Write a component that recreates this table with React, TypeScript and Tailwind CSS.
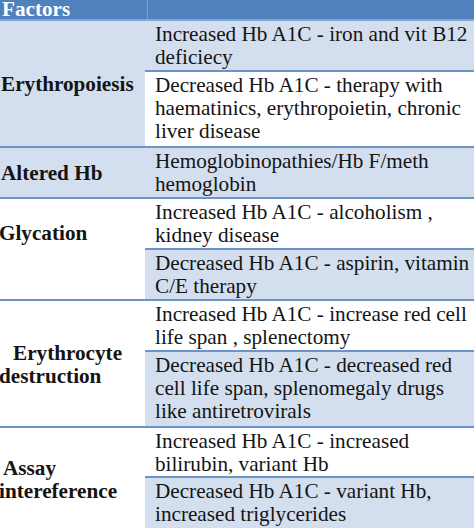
import React from "react";

type Cell = { lines: string[]; bg: string; h: string; divider?: boolean };

function Group({
  label,
  leftBg,
  labelClass,
  cells,
}: {
  label: React.ReactNode;
  leftBg: string;
  labelClass: string;
  cells: Cell[];
}) {
  return (
    <div className="flex border-b-2 border-[#6d93c8]">
      <div className={`w-[145px] shrink-0 flex items-center font-bold ${leftBg}`}>
        <div className={labelClass}>{label}</div>
      </div>
      <div className="flex-1 flex flex-col overflow-hidden">
        {cells.map((c, i) => (
          <div
            key={i}
            className={`${c.bg} ${c.h} ${c.divider ? "border-b-2 border-[#6d93c8]" : ""} pl-[10px] pt-[2px] whitespace-nowrap`}
          >
            {c.lines.map((l, j) => (
              <div key={j}>{l}</div>
            ))}
          </div>
        ))}
      </div>
    </div>
  );
}

export default function App() {
  const blue = "bg-[#d3dfee]";
  const white = "bg-white";
  return (
    <div className="w-[474px] h-[528px] overflow-hidden bg-white text-[#141414] font-['Liberation_Serif','Times_New_Roman',serif] text-[21.2px] leading-[23px]">
      <div className="flex h-[21px] bg-[#4f81bd] border-b-2 border-[#86a6d4]">
        <div className="w-[147px] shrink-0 pl-[2px] text-white font-bold leading-[18px]">Factors</div>
        <div className="w-px bg-[#7b9fd0]" />
        <div className="flex-1" />
      </div>

      <Group
        label="Erythropoiesis"
        leftBg={blue}
        labelClass="pl-[1px] pt-[2px]"
        cells={[
          { lines: ["Increased Hb A1C - iron and vit B12", "deficiecy"], bg: blue, h: "h-[51px]", divider: true },
          {
            lines: ["Decreased Hb A1C - therapy with", "haematinics, erythropoietin, chronic", "liver disease"],
            bg: white,
            h: "h-[74px]",
          },
        ]}
      />

      <Group
        label="Altered Hb"
        leftBg={blue}
        labelClass="pl-[1px] pt-[2px]"
        cells={[{ lines: ["Hemoglobinopathies/Hb F/meth", "hemoglobin"], bg: blue, h: "h-[49px]" }]}
      />

      <Group
        label="Glycation"
        leftBg={white}
        labelClass="-ml-[1px] pb-[32px]"
        cells={[
          { lines: ["Increased Hb A1C - alcoholism ,", "kidney disease"], bg: white, h: "h-[51px]", divider: true },
          { lines: ["Decreased Hb A1C - aspirin, vitamin", "C/E therapy"], bg: blue, h: "h-[49px]" },
        ]}
      />

      <Group
        label={
          <>
            <div className="pl-[13px]">Erythrocyte</div>
            <div className="-ml-[1px]">destruction</div>
          </>
        }
        leftBg={white}
        labelClass="pt-[2px]"
        cells={[
          { lines: ["Increased Hb A1C - increase red cell", "life span , splenectomy"], bg: white, h: "h-[51px]", divider: true },
          {
            lines: ["Decreased Hb A1C - decreased red", "cell life span, splenomegaly drugs", "like antiretrovirals"],
            bg: blue,
            h: "h-[74px]",
          },
        ]}
      />

      <Group
        label={
          <>
            <div className="pl-[3px]">Assay</div>
            <div className="-ml-[1px]">intereference</div>
          </>
        }
        leftBg={white}
        labelClass="pt-[2px]"
        cells={[
          { lines: ["Increased Hb A1C - increased", "bilirubin, variant Hb"], bg: white, h: "h-[50px]", divider: true },
          { lines: ["Decreased Hb A1C - variant Hb,", "increased triglycerides"], bg: blue, h: "h-[52px]" },
        ]}
      />
    </div>
  );
}
